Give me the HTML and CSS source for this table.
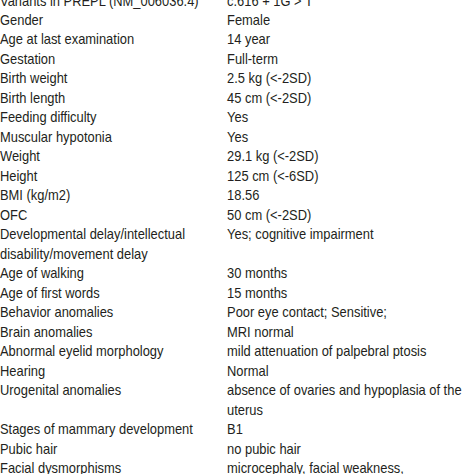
FILE: index.html
```html
<!DOCTYPE html>
<html>
<head>
<meta charset="utf-8">
<link rel="stylesheet" href="styles.css">
</head>
<body>
<div class="sheet">
  <div class="grid">
    <div class="k">Variants in PREPL (NM_006036.4)</div><div class="v">c.616 + 1G &gt; T</div>
    <div class="k">Gender</div><div class="v">Female</div>
    <div class="k">Age at last examination</div><div class="v">14 year</div>
    <div class="k">Gestation</div><div class="v">Full-term</div>
    <div class="k">Birth weight</div><div class="v">2.5 kg (&lt;-2SD)</div>
    <div class="k">Birth length</div><div class="v">45 cm (&lt;-2SD)</div>
    <div class="k">Feeding difficulty</div><div class="v">Yes</div>
    <div class="k">Muscular hypotonia</div><div class="v">Yes</div>
    <div class="k">Weight</div><div class="v">29.1 kg (&lt;-2SD)</div>
    <div class="k">Height</div><div class="v">125 cm (&lt;-6SD)</div>
    <div class="k">BMI (kg/m2)</div><div class="v">18.56</div>
    <div class="k">OFC</div><div class="v">50 cm (&lt;-2SD)</div>
    <div class="k">Developmental delay/intellectual disability/movement delay</div><div class="v">Yes; cognitive impairment</div>
    <div class="k">Age of walking</div><div class="v">30 months</div>
    <div class="k">Age of first words</div><div class="v">15 months</div>
    <div class="k">Behavior anomalies</div><div class="v">Poor eye contact; Sensitive;</div>
    <div class="k">Brain anomalies</div><div class="v">MRI normal</div>
    <div class="k">Abnormal eyelid morphology</div><div class="v">mild attenuation of palpebral ptosis</div>
    <div class="k">Hearing</div><div class="v">Normal</div>
    <div class="k">Urogenital anomalies</div><div class="v">absence of ovaries and hypoplasia of the uterus</div>
    <div class="k">Stages of mammary development</div><div class="v">B1</div>
    <div class="k">Pubic hair</div><div class="v">no pubic hair</div>
    <div class="k">Facial dysmorphisms</div><div class="v">microcephaly, facial weakness,</div>
  </div>
</div>
</body>
</html>
```
FILE: styles.css
```css
html, body {
  margin: 0;
  padding: 0;
  background: #ffffff;
  overflow: hidden;
}
.sheet {
  width: 474px;
  height: 474px;
  overflow: hidden;
}
.grid {
  width: 551px;
  margin-top: -9.5px;
  display: grid;
  grid-template-columns: 264px 1fr;
  font-family: "Liberation Sans", Arial, sans-serif;
  font-size: 15px;
  line-height: 19.48px;
  color: #231f20;
  transform: scaleX(0.86);
  transform-origin: 0 0;
}
.k {
  padding-right: 20px;
}
.v {
  padding-right: 6px;
}
```
